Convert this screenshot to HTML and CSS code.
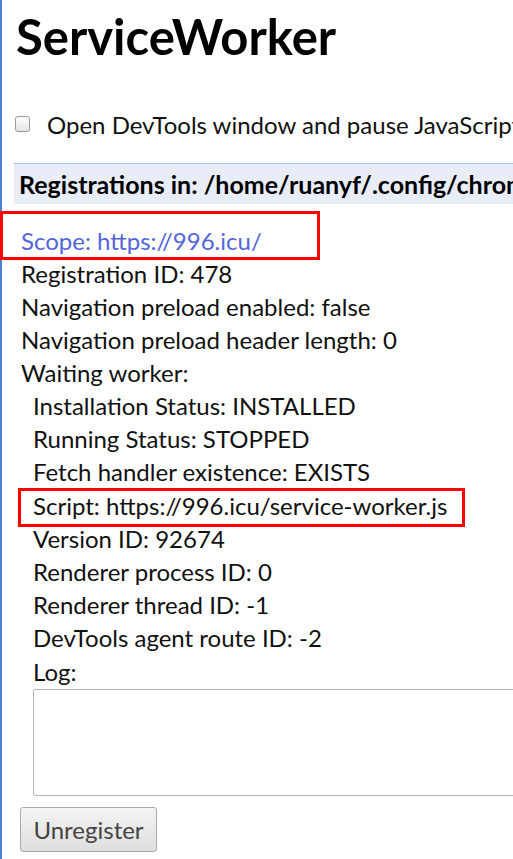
FILE: index.html
```html
<!DOCTYPE html>
<html>
<head>
<meta charset="utf-8">
<link rel="stylesheet" href="styles.css">
</head>
<body>
<div class="page">
  <h1 class="title">ServiceWorker</h1>
  <label class="debug">
    <span class="checkbox"></span>
    <span class="debug-text">Open DevTools window and pause JavaScript execution on Service Worker startup for debugging.</span>
  </label>
  <div class="reg-header">Registrations in: /home/ruanyf/.config/chromium/Default</div>
  <div class="registration">
    <div class="row scope">Scope: https://996.icu/</div>
    <div class="row">Registration ID: 478</div>
    <div class="row">Navigation preload enabled: false</div>
    <div class="row">Navigation preload header length: 0</div>
    <div class="row">Waiting worker:</div>
    <div class="worker">
      <div class="row">Installation Status: INSTALLED</div>
      <div class="row">Running Status: STOPPED</div>
      <div class="row">Fetch handler existence: EXISTS</div>
      <div class="row">Script: https://996.icu/service-worker.js</div>
      <div class="row">Version ID: 92674</div>
      <div class="row">Renderer process ID: 0</div>
      <div class="row">Renderer thread ID: -1</div>
      <div class="row">DevTools agent route ID: -2</div>
      <div class="row">Log:</div>
      <div class="log"></div>
    </div>
    <button class="unregister">Unregister</button>
  </div>
  <div class="mark mark-scope"></div>
  <div class="mark mark-script"></div>
</div>
</body>
</html>
```

FILE: styles.css
```css
html, body {
  margin: 0;
  padding: 0;
  overflow: hidden;
  background: #fff;
}
body {
  font-family: Lato, "Liberation Sans", sans-serif;
  color: #111;
  font-size: 24px;
}
.page {
  position: relative;
  min-height: 859px;
  border-left: 2px solid #4d7fd2;
  padding-left: 12px;
  white-space: nowrap;
}
.title {
  margin: 0;
  padding-top: 6px;
  font-size: 49px;
  line-height: 60px;
  font-weight: 700;
  padding-left: 2px;
  color: #000;
}
.debug {
  display: flex;
  align-items: center;
  margin-top: 43px;
  height: 30px;
  gap: 17px;
  padding-left: 1px;
}
.checkbox {
  width: 13px;
  height: 14px;
  border: 1px solid #9a9a9a;
  border-radius: 3px;
  background: linear-gradient(#fdfdfd, #e6e6e6);
  flex: none;
}
.debug-text {
  color: #111;
}
.reg-header {
  margin-top: 24px;
  border-top: 1px solid #a3c2ea;
  background: #e8edf8;
  height: 40px;
  line-height: 40px;
  font-size: 25px;
  font-weight: 700;
  padding-left: 5px;
  color: #000;
}
.registration {
  padding-top: 20px;
  padding-left: 7px;
}
.row {
  height: 33px;
  line-height: 33px;
}
.worker .row {
  height: 33.2px;
}
.scope {
  color: #5366d8;
}
.worker {
  padding-left: 12px;
}
.log {
  height: 105px;
  border: 1px solid #b5b5b5;
  border-radius: 2px;
  width: 600px;
  margin-top: 1px;
}
.unregister {
  display: block;
  margin-top: 11px;
  margin-left: -1px;
  width: 137px;
  height: 45px;
  font-family: inherit;
  font-size: 24px;
  color: #444;
  border: 1px solid #ababab;
  border-radius: 3px;
  background: linear-gradient(#f4f4f4, #dedede);
  padding: 0;
}
.mark {
  position: absolute;
  border: 3px solid #f00;
}
.mark-scope {
  left: -2px;
  top: 211px;
  width: 314px;
  height: 43px;
}
.mark-script {
  left: 16px;
  top: 488px;
  width: 441px;
  height: 33px;
}
```
